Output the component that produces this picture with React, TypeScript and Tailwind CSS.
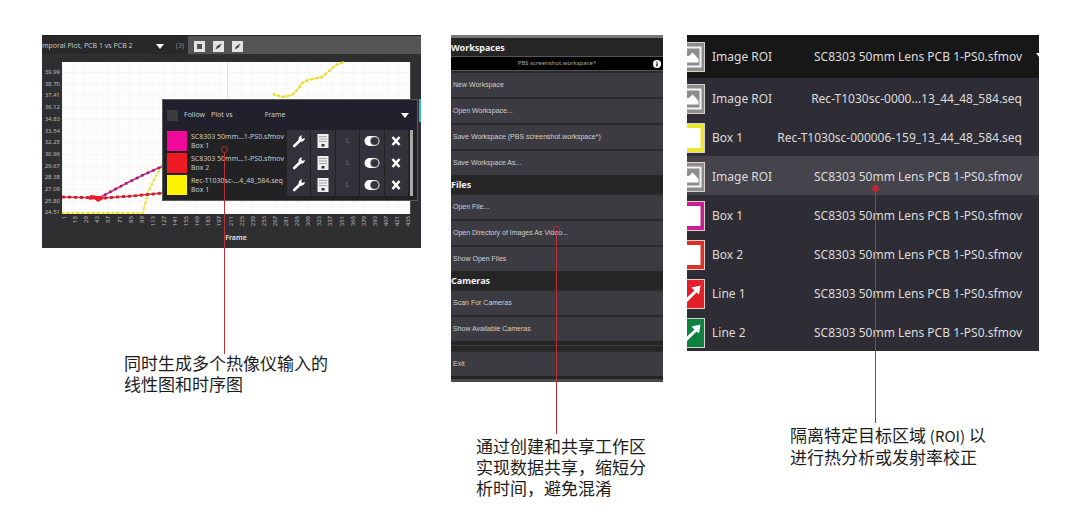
import type { ReactNode } from 'react';

const SERIES = [
  { id: 'magenta', swatch: 'bg-[#f0089a]', file: 'SC8303 50mm...1-PS0.sfmov', roi: 'Box 1' },
  { id: 'red', swatch: 'bg-[#ee1c22]', file: 'SC8303 50mm...1-PS0.sfmov', roi: 'Box 2' },
  { id: 'yellow', swatch: 'bg-[#fdf200]', file: 'Rec-T1030sc-...4_48_584.seq', roi: 'Box 1' },
];

const Y_LABELS = Array.from({ length: 13 }, (_, i) => (39.99 - i * 1.29).toFixed(2));
const X_LABELS = Array.from({ length: 32 }, (_, i) => 1 + i * 14);

type IconKind = 'image' | 'box' | 'line';

const ROI_ROWS: { kind: IconKind; color: string; name: string; file: string; active?: boolean }[] = [
  { kind: 'image', color: '#8d8d8f', name: 'Image ROI', file: 'Rec-T1030sc-0000...13_44_48_584.seq' },
  { kind: 'box', color: '#ece62c', name: 'Box 1', file: 'Rec-T1030sc-000006-159_13_44_48_584.seq' },
  { kind: 'image', color: '#8d8d8f', name: 'Image ROI', file: 'SC8303 50mm Lens PCB 1-PS0.sfmov', active: true },
  { kind: 'box', color: '#c91d90', name: 'Box 1', file: 'SC8303 50mm Lens PCB 1-PS0.sfmov' },
  { kind: 'box', color: '#dc3127', name: 'Box 2', file: 'SC8303 50mm Lens PCB 1-PS0.sfmov' },
  { kind: 'line', color: '#e3202a', name: 'Line 1', file: 'SC8303 50mm Lens PCB 1-PS0.sfmov' },
  { kind: 'line', color: '#0d8140', name: 'Line 2', file: 'SC8303 50mm Lens PCB 1-PS0.sfmov' },
];

function RoiIcon({ kind, color }: { kind: IconKind; color: string }) {
  return (
    <svg className="h-[30px] w-[18px] shrink-0" viewBox="12 0 18 30" aria-hidden="true">
      <rect x="0.5" y="0.5" width="29" height="29" fill={color} stroke="#d8d0cc" />
      {kind === 'image' && (
        <>
          <rect x="4.5" y="5.5" width="21" height="19" fill="none" stroke="#f4f4f4" strokeWidth="2" />
          <path d="M7 20.5 V17 L11 14 L14 14 L17.5 10.5 L21 14 L22.5 16 L23.5 17 V20.5 Z" fill="#fff" />
        </>
      )}
      {kind === 'box' && <rect x="4.5" y="5" width="21" height="20" fill="#fff" />}
      {kind === 'line' && (
        <path d="M6 24 L19.5 11.5 L16.5 8.5 L25.5 6.5 L24 15.5 L21.5 13.5 L9 26 Z" fill="#fff" />
      )}
    </svg>
  );
}

function WrenchIcon() {
  return (
    <svg className="h-[14px] w-[14px]" viewBox="0 0 14 14" aria-hidden="true">
      <path d="M2.2 12 L8.5 6" stroke="#fff" strokeWidth="2.6" strokeLinecap="round" />
      <path d="M12.8 3.8 L10.6 5 L9.2 3.6 L10.2 1.2 A3.8 3.8 0 0 0 6.6 5.8 L8.6 7.8 A3.8 3.8 0 0 0 12.8 3.8 Z" fill="#fff" />
    </svg>
  );
}

function ReportIcon() {
  return (
    <svg className="h-[16px] w-[12px]" viewBox="0 0 12 16" aria-hidden="true">
      <rect x="0.5" y="1" width="11" height="14" fill="#eee" />
      <path d="M2 3.5 H10 M2 6 H10 M2 8.5 H10" stroke="#a8a8ac" />
      <rect x="4.5" y="11" width="3" height="2.5" fill="#33323a" />
    </svg>
  );
}

function ToggleIcon() {
  return (
    <svg className="h-[12px] w-[16px]" viewBox="0 0 16 12" aria-hidden="true">
      <rect x="0.5" y="1" width="15" height="10" rx="5" fill="#fff" />
      <circle cx="10.5" cy="6" r="4" fill="#33323a" stroke="#77767c" strokeWidth="0.6" />
    </svg>
  );
}

function CloseIcon() {
  return (
    <svg className="h-[10px] w-[10px]" viewBox="0 0 10 10" aria-hidden="true">
      <path d="M1.5 1 L8.5 9 M8.5 1 L1.5 9" stroke="#fff" strokeWidth="2.6" />
    </svg>
  );
}

function CellButton({ label, children }: { label: string; children: ReactNode }) {
  return (
    <button aria-label={label} className="flex h-full flex-1 items-center justify-center bg-[#33323a]">
      {children}
    </button>
  );
}

function PlotChart() {
  return (
    <svg className="block w-full" viewBox="0 0 379 194">
      <rect x="20" y="8" width="348" height="152" fill="#fdfdfd" />
      {X_LABELS.map((n, i) => (
        <path key={n} d={`M${20.5 + i * 11.2} 8 V160`} stroke="#f6f6f6" />
      ))}
      {Y_LABELS.map((n, i) => (
        <path key={n} d={`M20 ${18.5 + i * 11.7} H368`} stroke="#f6f6f6" />
      ))}
      <path d="M185.5 8 V46" stroke="#e2e2e2" />
      <g fontSize="6" fill="#b9b9b9">
        {Y_LABELS.map((n, i) => (
          <text key={n} x="18" y={20 + i * 11.7} textAnchor="end">{n}</text>
        ))}
        {X_LABELS.map((n, i) => (
          <text key={n} transform={`translate(${24 + i * 11.1} 162) rotate(-90)`} textAnchor="end">{n}</text>
        ))}
      </g>
      <text x="194" y="186" fontSize="7" fontWeight="600" fill="#e6e6e6" textAnchor="middle">Frame</text>

      <g fill="none" strokeLinejoin="round">
        <path d="M20 159 H101 L106 138 L113 124 L121 109" stroke="#f3ea6c" strokeWidth="1.4" />
        <path d="M20 159 H101 L106 138 L113 124 L121 109" stroke="#eadf1e" strokeWidth="2" strokeDasharray="2 3" />
        <path d="M231 40 L240 43 L250 41 L257 34 L260 29 L266 26 L280 23 L287 17 L294 11 L302 8" stroke="#f0e756" strokeWidth="1.5" />
        <path d="M231 40 L240 43 L250 41 L257 34 L260 29 L266 26 L280 23 L287 17 L294 11 L302 8" stroke="#e6da1a" strokeWidth="2.4" strokeDasharray="2 3" />
        <path d="M57 144 L70 137 L83 130 L101 121 L121 112" stroke="#d0288e" strokeWidth="1.6" />
        <path d="M57 144 L70 137 L83 130 L101 121 L121 112" stroke="#9a1a62" strokeWidth="2.8" strokeDasharray="2 4" />
        <path d="M20 143 L62 144 L90 142 L121 139" stroke="#e2303a" strokeWidth="1.4" />
        <path d="M20 143 L62 144 L90 142 L121 139" stroke="#c71f2b" strokeWidth="2.8" strokeDasharray="3 3" />
      </g>
      <path d="M45 144 L49 141 L56 142 L63 144 L56 148 L52 145 L48 146 Z" fill="#ea1c2c" />
    </svg>
  );
}

function SeriesPopup() {
  return (
    <div className="absolute top-[64px] right-[3px] w-[256px] border border-[#5a5a5e] bg-[#222224] text-[7px] text-[#c9c9c9]">
      <div className="flex h-[30px] items-center bg-[#22202c] pr-2 pl-1">
        <label className="flex items-center gap-[6px]">
          <input type="checkbox" className="h-[11px] w-[11px] appearance-none bg-[#3c3c3e]" />
          Follow
        </label>
        <label htmlFor="plot-vs" className="ml-[6px]">Plot vs</label>
        <select id="plot-vs" className="ml-8 flex-1 appearance-none text-[7px]">
          <option>Frame</option>
        </select>
        <Caret />
      </div>
      <div className="flex pr-1 pb-1">
        <ul className="flex-1 pl-1">
          {SERIES.map((s) => (
            <li key={s.id} className="flex h-[22px] items-center">
              <span className={`h-[20px] w-[20px] shrink-0 ${s.swatch}`} />
              <div className="ml-1 w-[96px] leading-[9px] whitespace-nowrap">
                <p>{s.file}</p>
                <p>{s.roi}</p>
              </div>
              <div className="flex h-full flex-1 gap-px">
                <CellButton label="Settings"><WrenchIcon /></CellButton>
                <CellButton label="Report"><ReportIcon /></CellButton>
                <CellButton label="Link"><span className="text-[#77767c]">L</span></CellButton>
                <CellButton label="Visible"><ToggleIcon /></CellButton>
                <CellButton label="Remove"><CloseIcon /></CellButton>
              </div>
            </li>
          ))}
        </ul>
        <div className="ml-[2px] w-[3px] bg-[#a9a9ab]" />
      </div>
    </div>
  );
}

function Caret() {
  return (
    <svg className="pointer-events-none h-[5px] w-[8px] shrink-0" viewBox="0 0 8 5" aria-hidden="true">
      <path d="M0 0 H8 L4 5 Z" fill="#fff" />
    </svg>
  );
}

function ToolButton({ label, children }: { label: string; children: ReactNode }) {
  return (
    <button aria-label={label} className="flex h-[11px] w-[11px] items-center justify-center bg-[#e4e4e4]">
      <svg className="h-[9px] w-[9px]" viewBox="0 0 9 9" aria-hidden="true">{children}</svg>
    </button>
  );
}

function PlotPanel() {
  return (
    <div className="relative overflow-hidden bg-[#2f2f31]">
      <div className="flex h-[19px] border-t border-[#222]">
        <div className="flex w-[146px] items-center bg-[#282828] pt-[3px] text-[7px] text-[#c4c4c4]">
          <select aria-label="Plot" className="min-w-0 flex-1 appearance-none text-[7px]">
            <option>mporal Plot, PCB 1 vs PCB 2</option>
          </select>
          <Caret />
          <span className="w-[24px] pr-1 text-right text-[#8a8a8a]">(3)</span>
        </div>
        <div className="flex flex-1 items-center gap-2 bg-[#555] pt-[3px] pl-[6px]">
          <ToolButton label="Box">
            <rect x="2" y="2" width="5" height="5" fill="#555" />
          </ToolButton>
          <ToolButton label="Line">
            <path d="M1.5 7.5 L3 4 L7.5 1.5 L6 5 Z" fill="#444" />
          </ToolButton>
          <ToolButton label="Profile">
            <path d="M1.5 7.5 L3 4.5 L7.5 1.5 L5.5 5.5 Z" fill="#444" />
          </ToolButton>
        </div>
      </div>
      <PlotChart />
      <SeriesPopup />
      <div className="absolute top-[64px] right-0 h-[23px] w-[2px] bg-[#35b4c6]" />
    </div>
  );
}

function MenuTitle({ children }: { children: ReactNode }) {
  return (
    <h2 className="h-[18px] text-[9px] leading-[20px] font-bold text-[#f2f2f2]">{children}</h2>
  );
}

function MenuItem({ children }: { children: ReactNode }) {
  return (
    <button className="block h-[26px] w-full border-t-2 border-[#2a2a2d] bg-[#3c3b41] pl-[2px] text-left font-['Liberation_Sans',sans-serif] text-[7px] text-[#d0d0d0]">
      {children}
    </button>
  );
}

function WorkspaceMenu() {
  return (
    <nav className="overflow-hidden border-t-[3px] border-[#77777a] bg-[#252526]">
      <MenuTitle>Workspaces</MenuTitle>
      <div className="relative flex h-[15px] items-center justify-center border-y border-[#555] bg-black text-[6px] text-[#aaa]">
        PBS screenshot.workspace*
        <svg className="absolute right-[2px] h-[8px] w-[8px]" viewBox="0 0 8 8" aria-hidden="true">
          <circle cx="4" cy="4" r="4" fill="#fff" />
          <path d="M4 1.5 V2.5 M4 3.3 V6.5" stroke="#000" strokeWidth="1.3" />
        </svg>
      </div>
      <MenuItem>New Workspace</MenuItem>
      <MenuItem>Open Workspace...</MenuItem>
      <MenuItem>Save Workspace (PBS screenshot.workspace*)</MenuItem>
      <MenuItem>Save Workspace As...</MenuItem>
      <MenuTitle>Files</MenuTitle>
      <MenuItem>Open File...</MenuItem>
      <MenuItem>Open Directory of Images As Video...</MenuItem>
      <MenuItem>Show Open Files</MenuItem>
      <MenuTitle>Cameras</MenuTitle>
      <MenuItem>Scan For Cameras</MenuItem>
      <MenuItem>Show Available Cameras</MenuItem>
      <div className="my-1 h-px bg-[#3a3a3c]" />
      <MenuItem>Exit</MenuItem>
      <div className="mt-[3px] h-[3px] bg-[#48484b]" />
    </nav>
  );
}

function RoiPicker() {
  return (
    <div className="overflow-hidden bg-[#2e2d35] text-[12px] text-[#dcdcdc]">
      <button className="relative flex h-[43px] w-full items-center bg-[#171717] pr-[17px]">
        <RoiIcon kind="image" color="#8d8d8f" />
        <span className="ml-[7px]">Image ROI</span>
        <span className="ml-auto">SC8303 50mm Lens PCB 1-PS0.sfmov</span>
        <svg className="absolute top-[18px] right-0 h-[4px] w-[3px]" viewBox="0 0 3 4" aria-hidden="true">
          <path d="M0 0 H3 V4 Z" fill="#fff" />
        </svg>
      </button>
      <ul>
        {ROI_ROWS.map((row, i) => (
          <li key={i}>
            <button className={`flex h-[39px] w-full items-center pt-[2px] pr-[17px] ${row.active ? 'bg-[#45444d]' : ''}`}>
              <RoiIcon kind={row.kind} color={row.color} />
              <span className="ml-[7px]">{row.name}</span>
              <span className="ml-auto">{row.file}</span>
            </button>
          </li>
        ))}
      </ul>
    </div>
  );
}

// Ring on the feature, with a thin line running down to the caption
function Leader({ className, filled = false }: { className: string; filled?: boolean }) {
  return (
    <div className={`pointer-events-none absolute flex w-[7px] flex-col items-center ${className}`}>
      <span className={`h-[7px] w-[7px] shrink-0 rounded-full border border-[#d0242f] ${filled ? 'bg-[#b02a3a]' : ''}`} />
      <span className="w-px flex-1 bg-[#b8303a]" />
    </div>
  );
}

function Caption({ className, children }: { className: string; children: ReactNode }) {
  return (
    <figcaption className={`font-['Noto_Sans_CJK_SC',sans-serif] text-[17px] leading-[21px] whitespace-nowrap text-[#1c1c1c] ${className}`}>
      {children}
    </figcaption>
  );
}

export default function App() {
  return (
    <main className="grid min-h-screen grid-cols-[385fr_212fr_352fr] items-start gap-x-6 bg-white pt-[35px] pr-[33px] pl-[42px] font-['Noto_Sans',sans-serif]">
      <figure className="relative pr-[6px]">
        <PlotPanel />
        <Leader className="top-[111px] left-[179px] h-[208px]" />
        <Caption className="mt-[104px] ml-[82px]">
          同时生成多个热像仪输入的
          <br />
          线性图和时序图
        </Caption>
      </figure>

      <figure className="relative">
        <WorkspaceMenu />
        <Leader className="top-[191px] left-[102px] h-[208px]" />
        <Caption className="mt-[53px] ml-[25px]">
          通过创建和共享工作区
          <br />
          实现数据共享，缩短分
          <br />
          析时间，避免混淆
        </Caption>
      </figure>

      <figure className="relative">
        <RoiPicker />
        <Leader filled className="top-[150px] left-[185px] h-[238px]" />
        <Caption className="mt-[73px] ml-[103px]">
          隔离特定目标区域 <span className="text-[15px]">(ROI)</span> 以
          <br />
          进行热分析或发射率校正
        </Caption>
      </figure>
    </main>
  );
}
